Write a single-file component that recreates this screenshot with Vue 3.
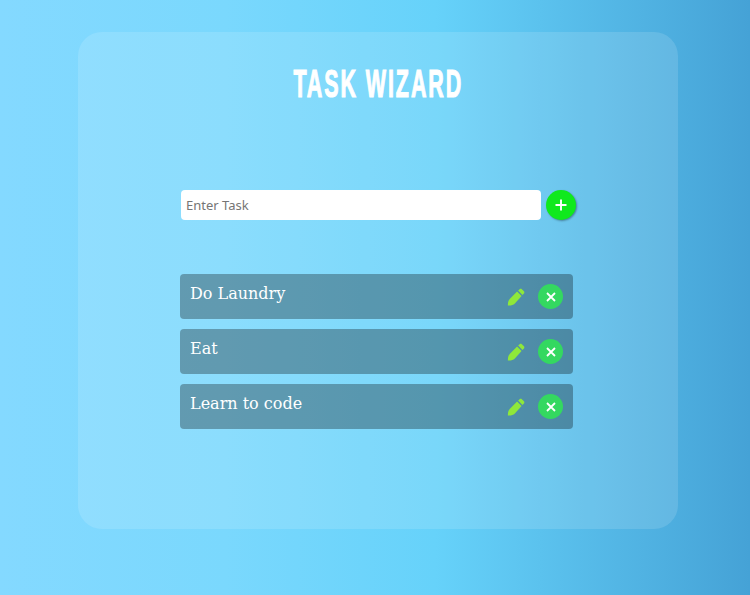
<script setup>
const tasks = ['Do Laundry', 'Eat', 'Learn to code']
</script>

<template>
  <div class="page">
    <main class="card">
      <h1 class="title"><span class="title-text">TASK WIZARD</span></h1>
      <form class="entry" @submit.prevent>
        <input class="field" type="text" placeholder="Enter Task" />
        <button class="add" type="submit" aria-label="Add">
          <svg width="12" height="12" viewBox="0 0 12 12"><path d="M6 0.5V11.5M0.5 6H11.5" stroke="#fff" stroke-width="1.9" fill="none" /></svg>
        </button>
      </form>
      <ul class="list">
        <li v-for="task in tasks" :key="task" class="row">
          <span class="label">{{ task }}</span>
          <svg class="pencil" width="18" height="18" viewBox="0 0 20 20">
            <path d="M1 19.500C.8 16.500 1.500 13.800 3 12.200L11.200 4 16.200 9 8.500 17.500C6.800 19 4.300 19.800 1 19.500z" fill="#8fe83a" />
            <path d="M12.400 2.900L14 1.300c.8-.7 1.800-.7 2.500 0l2.300 2.300c.7.7.7 1.700 0 2.500L17.200 7.700z" fill="#8fe83a" />
          </svg>
          <button class="remove" type="button" aria-label="Delete">
            <svg width="10" height="10" viewBox="0 0 10 10"><path d="M1 1L9 9M9 1L1 9" stroke="#fff" stroke-width="1.800" fill="none" /></svg>
          </button>
        </li>
      </ul>
    </main>
  </div>
</template>

<style scoped>
.page {
  box-sizing: border-box;
  height: 595px;
  padding: 32px 72px 66px 78px;
  background: linear-gradient(90deg, #84d9ff 0%, #7ad8fd 30%, #66d2fa 58%, #45a2d6 100%);
}
.card {
  box-sizing: border-box;
  width: 600px;
  height: 497px;
  padding-top: 32px;
  border-radius: 24px;
  background: rgba(255, 255, 255, 0.13);
}
.title {
  margin: 0 0 85px;
  height: 41px;
  font: 700 39px/40px "Liberation Sans", sans-serif;
  color: #fff;
  text-align: center;
}
.title-text {
  display: inline-block;
  letter-spacing: 3.5px;
  transform: scaleX(0.55);
  -webkit-text-stroke: 1.2px #fff;
}
.entry {
  display: flex;
  align-items: center;
  gap: 5px;
  margin: 0 0 54px 103px;
}
.field {
  box-sizing: border-box;
  width: 360px;
  height: 30px;
  padding: 0 5px;
  border: 0;
  border-radius: 4px;
  background: #fff;
  font: 13px "Noto Sans", sans-serif;
  outline: none;
}
.field::placeholder { color: #757575; opacity: 1; }
.add {
  display: flex;
  align-items: center;
  justify-content: center;
  width: 30px;
  height: 30px;
  padding: 0;
  border: 0;
  border-radius: 50%;
  background: #10e91d;
  box-shadow: 1px 1px 2px rgba(0, 0, 0, 0.35);
}
.list {
  display: flex;
  flex-direction: column;
  gap: 10px;
  width: 393px;
  margin: 0 0 0 102px;
  padding: 0;
  list-style: none;
}
.row {
  display: flex;
  align-items: center;
  height: 45px;
  padding: 0 10px;
  box-sizing: border-box;
  border-radius: 4px;
  background: rgba(0, 0, 0, 0.3);
}
.label {
  flex: 1;
  align-self: flex-start;
  margin-top: 10px;
  font: 16px/20px "DejaVu Serif", serif;
  color: #fff;
}
.pencil { margin-right: 13px; }
.remove {
  display: flex;
  align-items: center;
  justify-content: center;
  width: 25px;
  height: 25px;
  padding: 0;
  border: 0;
  border-radius: 50%;
  background: #34d860;
}
</style>
